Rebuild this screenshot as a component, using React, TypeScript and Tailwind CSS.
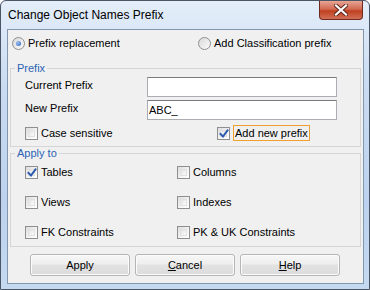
import React from "react";

const font = { fontFamily: '"Liberation Sans", Arial, sans-serif' };

function CheckBox({ checked }: { checked?: boolean }) {
  return (
    <span className="relative inline-block w-[13px] h-[13px] border border-[#8e8f8f] bg-[linear-gradient(135deg,#dcdcdc,#f6f6f6_60%,#ffffff)] shrink-0">
      <span className="absolute inset-[2px] border border-[#e0e0e0] bg-[linear-gradient(135deg,#e2e2e2,#fbfbfb)]" />
      {checked && (
        <svg className="absolute left-[1px] top-[1px]" width="10" height="10" viewBox="0 0 10 10">
          <path d="M1.5 5 L4 7.5 L8.5 1.5" fill="none" stroke="#2e5bb0" strokeWidth="2" strokeLinecap="square" />
        </svg>
      )}
    </span>
  );
}

function Radio({ checked }: { checked?: boolean }) {
  return (
    <span className="relative inline-flex items-center justify-center w-[13px] h-[13px] rounded-full border border-[#8e8f8f] bg-[linear-gradient(135deg,#d9d9d9,#fbfbfb)] shrink-0">
      {checked && (
        <span className="w-[5px] h-[5px] rounded-full bg-[radial-gradient(circle_at_35%_35%,#9fc2f0,#2b5fc2)]" />
      )}
    </span>
  );
}

function Btn({ children }: { children: React.ReactNode }) {
  return (
    <div className="w-[100px] h-[22px] rounded-[3px] border border-[#b5b5b5] bg-[linear-gradient(to_bottom,#f7f7f7,#eeeeee_45%,#e2e2e2_50%,#dcdcdc)] flex items-center justify-center text-[11px] text-black shadow-[inset_0_0_0_1px_#fcfcfc]">
      {children}
    </div>
  );
}

export default function App() {
  return (
    <div style={font} className="w-[370px] h-[290px] bg-white">
      <div className="w-[370px] h-[290px] rounded-t-[6px] border border-[#4a5566] bg-[linear-gradient(to_bottom,#e4eefa,#c9dbf1_30%,#bcd2ee_70%,#c5d9f0)] flex flex-col">
        {/* title bar */}
        <div className="h-[28px] flex items-start relative">
          <div className="pl-[7px] pt-[7px] text-[12px] leading-[14px] text-black">Change Object Names Prefix</div>
          <div className="ml-auto mr-[6px] w-[44px] h-[19px] rounded-b-[4px] border border-t-0 border-[#6f2a1f] bg-[linear-gradient(to_bottom,#e8a594,#d26a52_45%,#c0401f_55%,#d27058)] flex items-center justify-center">
            <svg width="14" height="12" viewBox="0 0 14 12">
              <path d="M2 1.5 L12 10.5 M12 1.5 L2 10.5" stroke="#5a2418" strokeWidth="4" strokeLinecap="square" />
              <path d="M2 1.5 L12 10.5 M12 1.5 L2 10.5" stroke="#ffffff" strokeWidth="2.2" strokeLinecap="square" />
            </svg>
          </div>
        </div>
        {/* content */}
        <div className="ml-[6px] mr-[5px] h-[255px] border border-[#8396b0] bg-[#f0f0f0] flex flex-col text-[11px] text-black">
          <div className="h-[32px] flex items-center pb-[6px]">
            <div className="ml-[4px] flex items-center gap-[3px] w-[186px]">
              <Radio checked />
              <span>Prefix replacement</span>
            </div>
            <div className="flex items-center gap-[3px]">
              <Radio />
              <span>Add Classification prefix</span>
            </div>
          </div>
          <fieldset className="mx-[2px] border border-[#d5d5d5] pl-[14px] pb-[4px]">
            <legend className="ml-[-10px] px-[2px] text-[11px] leading-[12px] text-[#2b63b5]">Prefix</legend>
            <div className="mt-[3px] flex items-center h-[20px]">
              <span className="w-[122px] -mt-[3px]">Current Prefix</span>
              <div className="w-[190px] h-[20px] border border-[#abadb3] border-t-[#7a7a7a] bg-white" />
            </div>
            <div className="mt-[3px] flex items-center h-[20px]">
              <span className="w-[122px] -mt-[3px]">New Prefix</span>
              <div className="w-[190px] h-[20px] border border-[#abadb3] border-t-[#7a7a7a] bg-white flex items-center pl-[1px]">ABC_</div>
            </div>
            <div className="mt-[4px] h-[18px] flex items-center">
              <div className="flex items-center gap-[3px] w-[192px]">
                <CheckBox />
                <span>Case sensitive</span>
              </div>
              <div className="flex items-center gap-[3px]">
                <CheckBox checked />
                <span className="border border-[#f0a030] px-[1px] leading-[14px]">Add new prefix</span>
              </div>
            </div>
          </fieldset>
          <fieldset className="mx-[2px] border border-[#d5d5d5] pl-[14px] pb-[5px]">
            <legend className="ml-[-10px] px-[2px] text-[11px] leading-[12px] text-[#2b63b5]">Apply to</legend>
            {[
              ["Tables", true, "Columns"],
              ["Views", false, "Indexes"],
              ["FK Constraints", false, "PK & UK Constraints"],
            ].map(([a, c, b], i) => (
              <div key={i} className={(i === 0 ? "mt-[4px]" : "mt-[12px]") + " h-[18px] flex items-center"}>
                <div className="flex items-center gap-[3px] w-[152px]">
                  <CheckBox checked={c as boolean} />
                  <span>{a as string}</span>
                </div>
                <div className="flex items-center gap-[3px]">
                  <CheckBox />
                  <span>{b as string}</span>
                </div>
              </div>
            ))}
          </fieldset>
          <div className="mt-[7px] ml-[22px] flex gap-[5px]">
            <Btn>Apply</Btn>
            <Btn>
              <span><span className="underline">C</span>ancel</span>
            </Btn>
            <Btn>
              <span><span className="underline">H</span>elp</span>
            </Btn>
          </div>
        </div>
      </div>
    </div>
  );
}
